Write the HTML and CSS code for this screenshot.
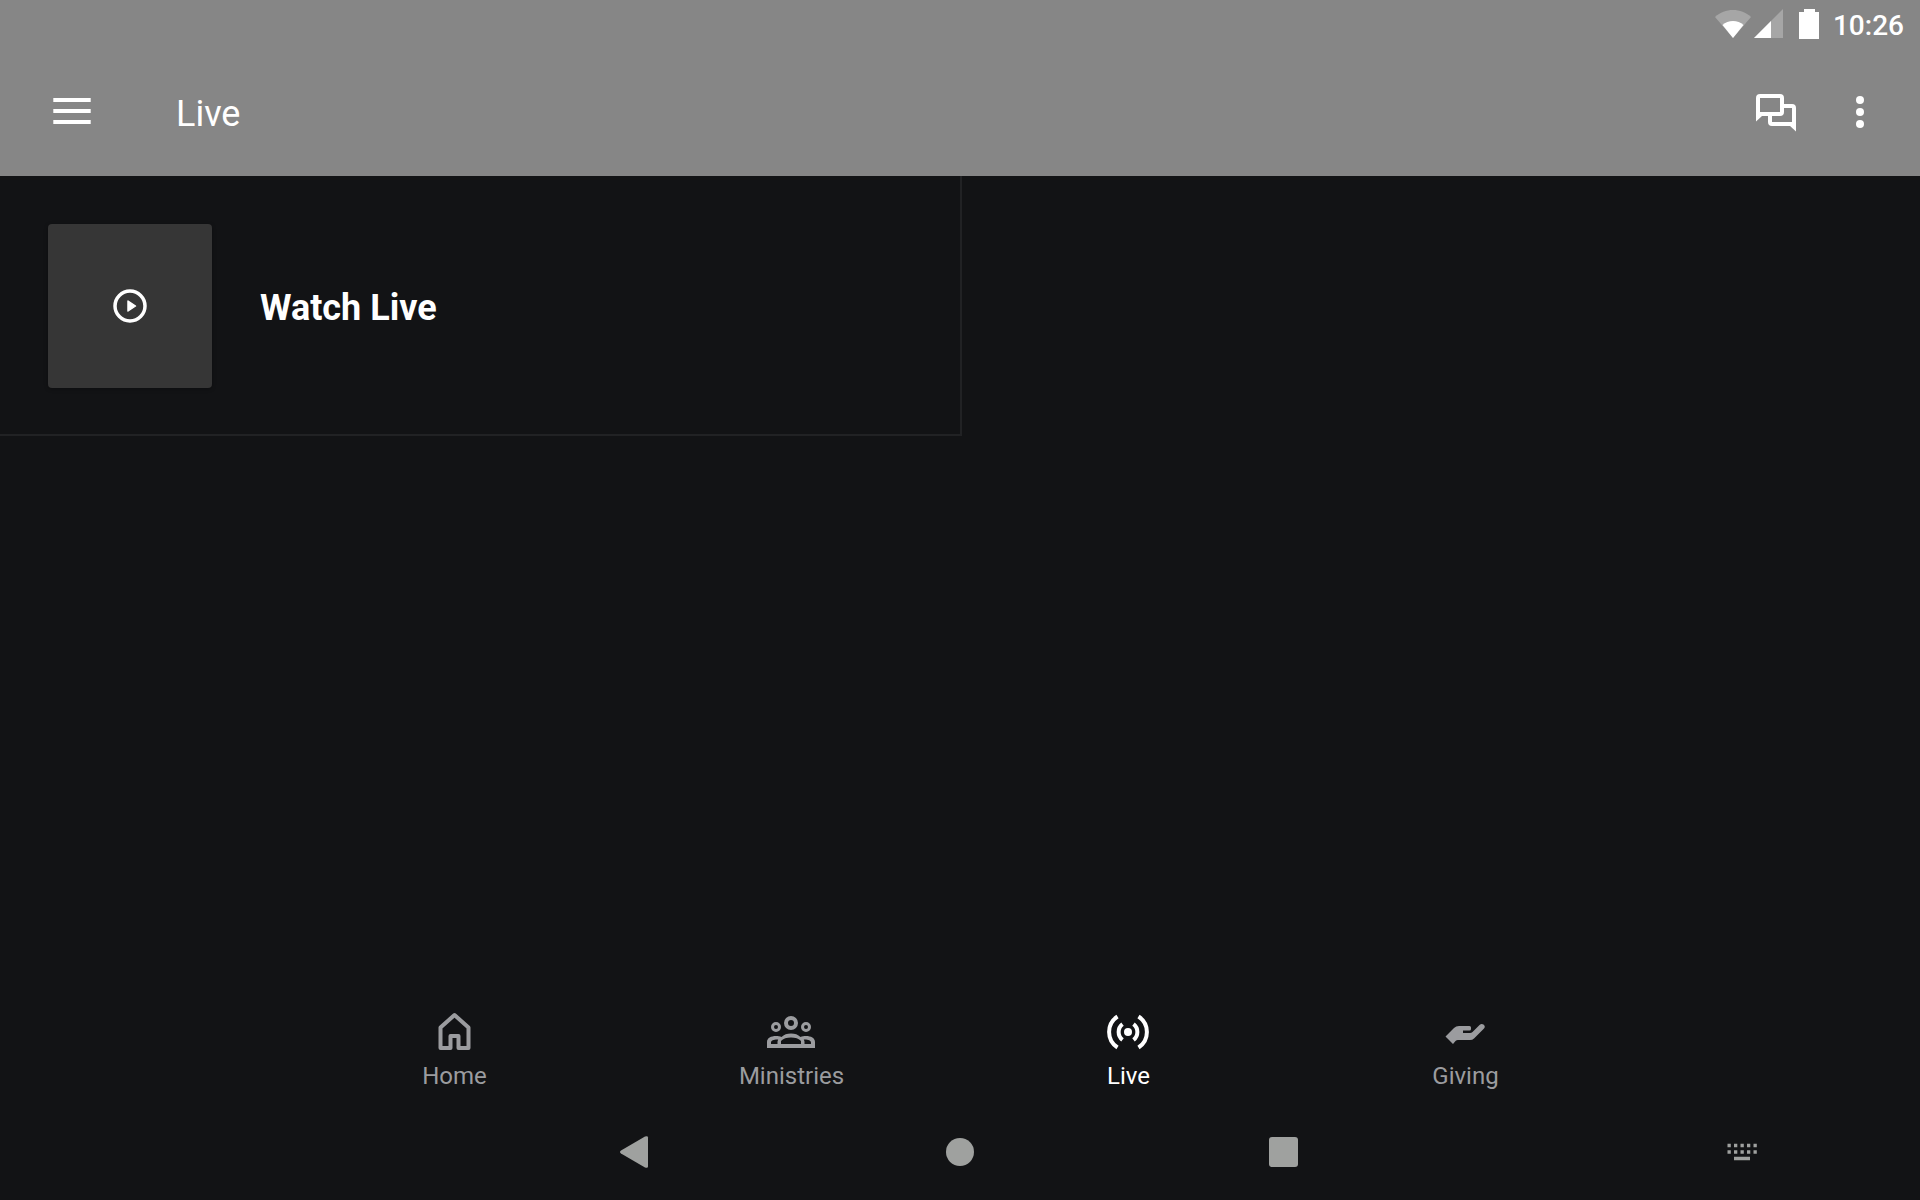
FILE: index.html
```html
<!DOCTYPE html>
<html lang="en">
<head>
  <meta charset="UTF-8">
  <meta name="viewport" content="width=device-width, initial-scale=1.0">
  <title>Live</title>
  <link rel="stylesheet" href="styles.css">
</head>
<body>
  <header class="header">
    <div class="status-bar">
      <svg class="wifi" width="36" height="28" viewBox="0 0 36 28">
        <path d="M0 7C10-2.300 26-2.300 36 7L18 28z" fill="#a6a6a6"/>
        <path d="M7.500 15C13 9.700 23 9.700 28.500 15L18 28z" fill="#fff"/>
      </svg>
      <svg class="signal" width="30" height="30" viewBox="0 0 30 30">
        <path d="M0 29L29 0v29z" fill="#a6a6a6"/>
        <path d="M0 29L17 12v17z" fill="#fff"/>
      </svg>
      <svg class="battery" width="20" height="30" viewBox="0 0 20 30">
        <path d="M5 0h11v3h4v27H0V3h5z" fill="#fff"/>
      </svg>
      <span class="clock">10:26</span>
    </div>
    <div class="toolbar">
      <button class="icon-btn" aria-label="Menu">
        <svg width="48" height="48" viewBox="0 0 48 48" fill="#fff">
          <path d="M5.300 10h37.400v4H5.300zM5.300 21h37.400v4H5.300zM5.300 32h37.400v4H5.300z"/>
        </svg>
      </button>
      <h1>Live</h1>
      <div class="actions">
        <button class="icon-btn" aria-label="Messages">
          <svg width="48" height="48" viewBox="0 0 48 48" fill="none" stroke="#fff" stroke-width="4">
            <path d="M6 10a2 2 0 0 1 2-2h20a2 2 0 0 1 2 2v14a2 2 0 0 1-2 2H6z" stroke-linejoin="round"/>
            <path d="M4 25v8.500l6-5.500z" fill="#fff" stroke="none"/>
            <path d="M30 18h10a2 2 0 0 1 2 2v16H20a2 2 0 0 1-2-2v-8"/>
            <path d="M44 34v9.500l-6.500-6z" fill="#fff" stroke="none"/>
          </svg>
        </button>
        <button class="icon-btn" aria-label="More options">
          <svg width="48" height="48" viewBox="0 0 48 48" fill="#fff">
            <circle cx="24" cy="12" r="4"/>
            <circle cx="24" cy="24" r="4"/>
            <circle cx="24" cy="36" r="4"/>
          </svg>
        </button>
      </div>
    </div>
  </header>

  <main class="content">
    <a href="#" class="media-item">
      <span class="thumb">
        <svg width="36" height="36" viewBox="0 0 36 36">
          <circle cx="18" cy="18" r="15" fill="none" stroke="#fff" stroke-width="3.500"/>
          <path d="M16 13l7.500 5-7.500 5z" fill="#fff" stroke="#fff" stroke-width="1.500" stroke-linejoin="round"/>
        </svg>
      </span>
      <span class="media-title">Watch Live</span>
    </a>
  </main>

  <nav class="tabs">
    <a href="#" class="tab">
      <svg width="48" height="48" viewBox="0 0 48 48" fill="none" stroke="currentColor" stroke-width="4" stroke-linejoin="round">
        <path d="M9.500 40V19.500L23.500 7l14 12.500V40H27.500V28h-8v12z"/>
      </svg>
      <span>Home</span>
    </a>
    <a href="#" class="tab">
      <svg width="48" height="48" viewBox="1 0 48 48" fill="none" stroke="currentColor" overflow="visible">
        <circle cx="24" cy="15" r="5" stroke-width="4"/>
        <circle cx="9" cy="19" r="3.500" stroke-width="3"/>
        <circle cx="39" cy="19" r="3.500" stroke-width="3"/>
        <path d="M0 40v-6c0-4 4-6 9-6 2 0 4 .3 5.500 1C17 26.500 20 25.500 24 25.500s7 1 9.500 3.500c1.500-.7 3.500-1 5.500-1 5 0 9 2 9 6v6zM4 36h6.500v-2.500l.7-2C7 31.300 4 32.500 4 34.500zM14 36h20v-3c-2-2.500-6-3.500-10-3.500s-8 1-10 3.500zM37.500 36H44v-1.500c0-2-3-3.200-7.200-3l.7 2z" fill="currentColor" fill-rule="evenodd" stroke="none"/>
      </svg>
      <span>Ministries</span>
    </a>
    <a href="#" class="tab active" aria-current="page">
      <svg width="48" height="48" viewBox="1 0 48 48" fill="none" stroke="currentColor" stroke-width="4">
        <circle cx="24" cy="24" r="4" fill="currentColor" stroke="none"/>
        <path d="M18.500 16.100a10 10 0 0 0 0 15.800M29.500 16.100a10 10 0 0 1 0 15.800"/>
        <path d="M13.500 8.500a18.500 18.500 0 0 0 0 31M34.500 8.500a18.500 18.500 0 0 1 0 31"/>
      </svg>
      <span>Live</span>
    </a>
    <a href="#" class="tab">
      <svg width="48" height="48" viewBox="1 0 48 48" fill="currentColor">
        <path d="M4.500 28.500L13 20q2-2 5-2h10.500q1.500 0 1.500 1.500v1.500q0 1.500-1.500 1.500H22V25h7q1.500 0 2.500-1L38.500 17q2-1.800 4-.5 2.300 2 .5 4L33 30.500q-1.500 1.500-4 1.500H17q-1.500 0-2.500 1L12 36z"/>
      </svg>
      <span>Giving</span>
    </a>
  </nav>

  <div class="system-bar">
    <button class="sys-btn back" aria-label="Back">
      <svg width="32" height="32" viewBox="0 0 32 32" fill="#9fa19f">
        <path d="M1 14.500L25 .5q3-1 3 1v29q0 2-3 1L1 17.500Q-1 16 1 14.500z"/>
      </svg>
    </button>
    <button class="sys-btn home" aria-label="Home screen">
      <svg width="32" height="32" viewBox="0 0 32 32" fill="#9fa19f">
        <circle cx="16" cy="16" r="14"/>
      </svg>
    </button>
    <button class="sys-btn recent" aria-label="Recent apps">
      <svg width="32" height="32" viewBox="0 0 32 32" fill="#9fa19f">
        <rect x="1" y="1" width="29" height="30" rx="3"/>
      </svg>
    </button>
    <button class="sys-btn keyboard" aria-label="Switch keyboard">
      <svg width="32" height="32" viewBox="0 0 32 32" fill="none" stroke="#9fa19f" stroke-width="3.500">
        <path d="M1.500 9.500h30M1.500 16h30" stroke-dasharray="3.300 3.200"/>
        <path d="M8 22.500h16"/>
      </svg>
    </button>
  </div>
</body>
</html>
```

FILE: styles.css
```css
* {
  margin: 0;
  padding: 0;
  box-sizing: border-box;
}

body {
  display: flex;
  flex-direction: column;
  min-height: 100vh;
  background: #121315;
  color: #fff;
  font-family: Roboto, sans-serif;
}

svg {
  display: block;
  flex-shrink: 0;
}

a {
  color: inherit;
  text-decoration: none;
}

button {
  background: none;
  border: none;
  cursor: pointer;
}

.header {
  background: #868686;
}

/* Status bar */
.status-bar {
  display: flex;
  justify-content: flex-end;
  align-items: center;
  height: 48px;
  padding-right: 16px;
}

.signal {
  margin-left: 3px;
}

.battery {
  margin-left: 15px;
}

.clock {
  margin-left: 14px;
  padding-top: 4px;
  font-size: 28px;
  font-weight: 500;
  line-height: 32px;
}

/* Toolbar */
.toolbar {
  display: flex;
  align-items: center;
  height: 128px;
  padding: 0 36px 0 48px;
}

.toolbar h1 {
  margin-left: 80px;
  padding-top: 4px;
  font-size: 36px;
  font-weight: 400;
  line-height: 48px;
}

.actions {
  display: flex;
  gap: 36px;
  margin-left: auto;
}

.icon-btn {
  width: 48px;
  height: 48px;
}

/* Media list */
.content {
  display: grid;
  grid-template-columns: 1fr 1fr;
  align-items: start;
  flex: 1;
}

.media-item {
  display: flex;
  align-items: center;
  gap: 48px;
  padding: 48px 48px 46px;
  margin-right: -2px;
  border-right: 2px solid #212224;
  border-bottom: 2px solid #212224;
}

.thumb {
  display: flex;
  align-items: center;
  justify-content: center;
  width: 164px;
  height: 164px;
  border-radius: 4px;
  background: #363636;
  box-shadow: 0 1px 4px rgba(0, 0, 0, 0.3);
}

.media-title {
  padding-top: 4px;
  font-size: 36px;
  font-weight: 700;
  line-height: 48px;
}

/* Bottom tabs */
.tabs {
  display: flex;
  width: 100%;
  max-width: 1348px;
  height: 112px;
  margin: 0 auto;
  padding-top: 16px;
}

.tab {
  display: flex;
  flex: 1;
  flex-direction: column;
  align-items: center;
  gap: 4px;
  color: #9b9c9f;
  font-size: 24px;
  line-height: 32px;
}

.tab.active {
  color: #fff;
}

/* System navigation */
.system-bar {
  display: grid;
  grid-template-columns: 1fr 324px 324px 324px 1fr;
  align-items: center;
  height: 96px;
}

.sys-btn {
  width: 32px;
  height: 32px;
  justify-self: center;
}

.back {
  grid-column: 2;
}

.keyboard {
  justify-self: end;
  margin-right: 162px;
}
```
